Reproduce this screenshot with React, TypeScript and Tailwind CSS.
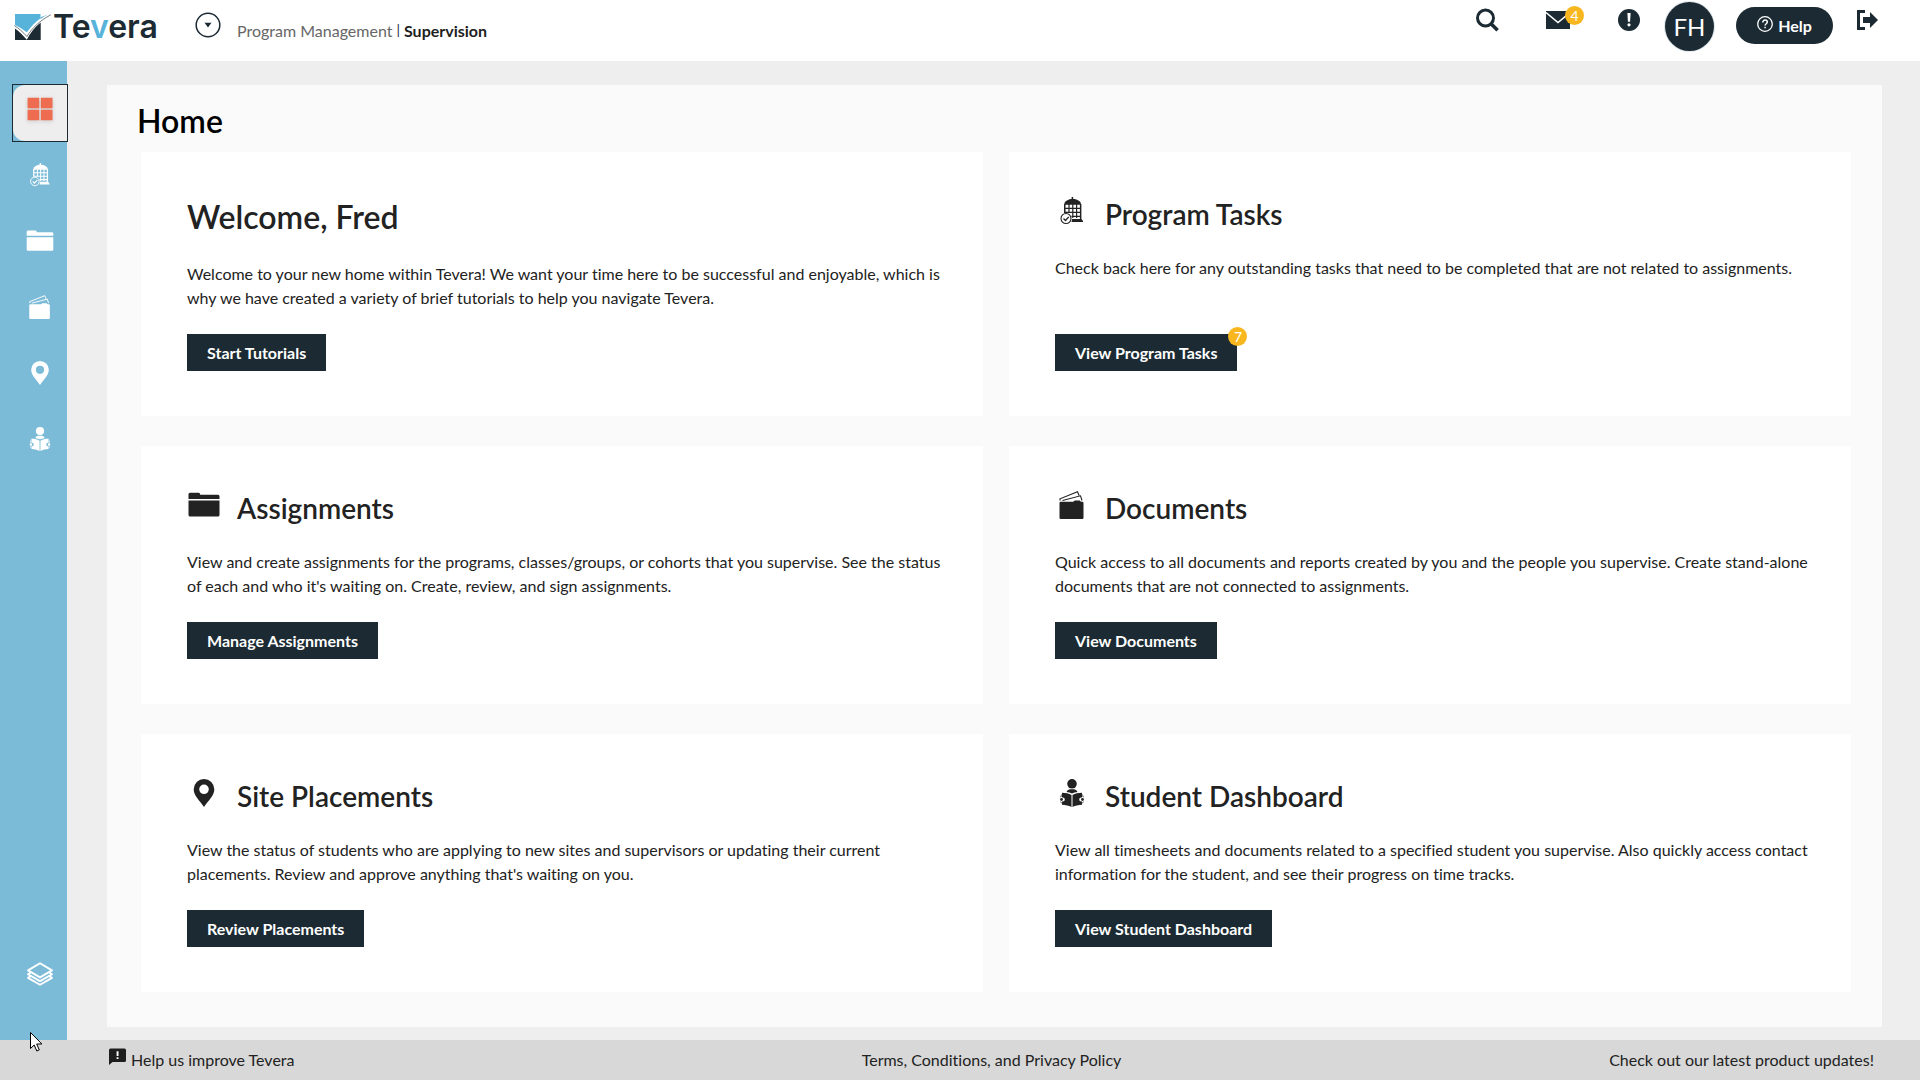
import type { ReactNode } from "react";

type IconProps = { className?: string };

function BuildingIcon({ className }: IconProps) {
    return (
        <svg viewBox="0 0 32 28" className={className} fill="currentColor" aria-hidden="true">
            <path d="M15.600 0h1.600v2.200h-1.600zM17 1.800c4 .5 6.500 2 7.800 4V7.800H8.500V5.800C9.800 3.800 12.500 2.200 16.200 1.800z" />
            <path d="M8 7h1.500v9H8zM23.900 7h1.500v15h-1.500zM12.400 7h1.200v8h-1.200zM16.200 7h1.200v14h-1.200zM20 7h1.200v14H20zM8 10.800h17v1.200H8zM8 14.800h17V16H8zM15.500 18.800H25V20h-9.500zM16.200 22h9.300l1.500 2v1H15.500z" />
            <circle cx="10" cy="21.500" r="5" fill="none" stroke="currentColor" strokeWidth="1.100" />
            <path d="M7.500 21.500l2 2 3.300-3.600" fill="none" stroke="currentColor" strokeWidth="1.300" />
        </svg>
    );
}

function FolderIcon({ className }: IconProps) {
    return (
        <svg viewBox="0 0 32 28" className={className} fill="currentColor" aria-hidden="true">
            <path d="M.5 8V3.200A1.500 1.500 0 0 1 2 1.700h8.500a1.500 1.500 0 0 1 1.500 1.200l.2.800H30a1.500 1.500 0 0 1 1.500 1.500V8z" />
            <path d="M.5 9.500h31V24a1.500 1.500 0 0 1-1.500 1.500H2A1.500 1.500 0 0 1 .5 24z" />
        </svg>
    );
}

function DocumentsIcon({ className }: IconProps) {
    return (
        <svg viewBox="0 0 32 28" className={className} fill="currentColor" aria-hidden="true">
            <path d="M4 9.500V7.800L21.500.8l1.600 3.700M6.500 9.500L24.500 4.800l1.500 4.700" fill="none" stroke="currentColor" strokeWidth="1.100" />
            <path d="M3.500 12a1.200 1.200 0 0 1 1.200-1.200h12.500l1.500-1.300h5l1.300 1.300h1.300a1.200 1.200 0 0 1 1.200 1.200v14.700a1.200 1.200 0 0 1-1.200 1.200H4.700a1.200 1.200 0 0 1-1.200-1.200z" />
        </svg>
    );
}

function PinIcon({ className }: IconProps) {
    return (
        <svg viewBox="0 0 32 28" className={className} fill="currentColor" aria-hidden="true">
            <path fillRule="evenodd" d="M16 0a10.300 10.300 0 0 0-10.300 10.300C5.700 17 12 22 16 28c4-6 10.300-11 10.300-17.700A10.300 10.300 0 0 0 16 0zm0 5.500a4.800 4.800 0 1 1 0 9.600 4.800 4.800 0 0 1 0-9.600z" />
        </svg>
    );
}

function ReaderIcon({ className }: IconProps) {
    return (
        <svg viewBox="0 0 32 28" className={className} fill="currentColor" aria-hidden="true">
            <circle cx="16" cy="4.800" r="4.800" />
            <path d="M10.500 13c.8-1.800 2.300-2.700 3.500-2.700h4c1.200 0 2.700.9 3.500 2.700-2 .2-4.100.7-5.500 1.600-1.400-.9-3.500-1.400-5.500-1.600z" />
            <path d="M6 13.800c3.500 0 6.900.7 9.500 2.200V28c-2.800-1.500-6-2-9.500-2.300v-3.200h.8a2 2 0 0 0 0-4H6zM26 13.800c-3.500 0-6.900.7-9.500 2.200V28c2.800-1.500 6-2 9.500-2.300v-3.200h-.8a2 2 0 0 1 0-4h.8z" />
            <path d="M5.500 14.500v3.300l-1.300.8zM5.500 23v1.800l-1.500-2.500zM26.500 14.500v3.300l1.300.8zM26.500 23v1.800l1.500-2.500z" />
            <circle cx="5.500" cy="20.500" r="1.400" />
            <circle cx="26.500" cy="20.500" r="1.400" />
        </svg>
    );
}

function HomeIcon({ className }: IconProps) {
    return (
        <svg viewBox="0 0 32 28" className={className} fill="currentColor" aria-hidden="true">
            <path d="M1.500 1h13.600v12H1.500zM17 1h13.600v12H17zM1.500 15h13.600v12H1.500zM17 15h13.600v12H17z" />
        </svg>
    );
}

function LayersIcon({ className }: IconProps) {
    return (
        <svg viewBox="0 0 32 28" className={className} fill="none" stroke="currentColor" strokeWidth="2.200" strokeLinejoin="round" aria-hidden="true">
            <path d="M16 1.500l14 8.200-14 8.200L2 9.700z" />
            <path d="M4.800 12.500L2 14.300l14 8 14-8-2.800-1.800M4.800 16.700L2 18.500l14 8 14-8-2.800-1.800" />
        </svg>
    );
}

function LogoMark() {
    return (
        <svg viewBox="0 0 38 28" className="h-7 w-[38px]" aria-hidden="true">
            <path d="M1 15.500C5 18.500 9 22 12.800 26.800 16 20 20.500 14.500 26.700 9.500V27H1z" fill="#1c2b33" />
            <path d="M1 1h25.500v4.200C21.500 9 17 13.500 12.800 19.300 9 16.500 5 13.800 1 12z" fill="#57b3da" />
            <path d="M26.500 4.200L34 1.600C31.300 3 29 4.300 26.500 6z" fill="#57b3da" />
            <path d="M36.800 1.800C26 7.500 18 15 12.900 23.500 9 19 5 15.500.3 12.600" fill="none" stroke="#1c2b33" strokeWidth=".6" />
        </svg>
    );
}

function Badge({ children }: { children: ReactNode }) {
    return (
        <span className="absolute -top-[7px] -right-[10px] flex size-[19px] items-center justify-center rounded-full bg-[#f8b71f] text-[14px] leading-none font-normal text-white">
            {children}
        </span>
    );
}

const navItems = [
    { label: "Home", Icon: HomeIcon, active: true },
    { label: "Program Tasks", Icon: BuildingIcon },
    { label: "Assignments", Icon: FolderIcon },
    { label: "Documents", Icon: DocumentsIcon },
    { label: "Site Placements", Icon: PinIcon },
    { label: "Student Dashboard", Icon: ReaderIcon },
];

const cards = [
    {
        title: "Welcome, Fred",
        text: "Welcome to your new home within Tevera! We want your time here to be successful and enjoyable, which is why we have created a variety of brief tutorials to help you navigate Tevera.",
        button: "Start Tutorials",
    },
    {
        title: "Program Tasks",
        Icon: BuildingIcon,
        text: "Check back here for any outstanding tasks that need to be completed that are not related to assignments.",
        button: "View Program Tasks",
        count: 7,
    },
    {
        title: "Assignments",
        Icon: FolderIcon,
        text: "View and create assignments for the programs, classes/groups, or cohorts that you supervise. See the status of each and who it's waiting on. Create, review, and sign assignments.",
        button: "Manage Assignments",
    },
    {
        title: "Documents",
        Icon: DocumentsIcon,
        text: "Quick access to all documents and reports created by you and the people you supervise. Create stand-alone documents that are not connected to assignments.",
        button: "View Documents",
    },
    {
        title: "Site Placements",
        Icon: PinIcon,
        text: "View the status of students who are applying to new sites and supervisors or updating their current placements. Review and approve anything that's waiting on you.",
        button: "Review Placements",
    },
    {
        title: "Student Dashboard",
        Icon: ReaderIcon,
        text: "View all timesheets and documents related to a specified student you supervise. Also quickly access contact information for the student, and see their progress on time tracks.",
        button: "View Student Dashboard",
    },
];

function Header() {
    return (
        <header className="flex h-[61px] items-start justify-between bg-white pr-[42px] pl-[14px] text-[#1c2b33]">
            <div className="flex items-start">
                <a href="#" aria-label="Tevera" className="flex w-[146px] items-start gap-px pt-[13px]">
                    <LogoMark />
                    <span className="font-['Inter',sans-serif] text-[32px] leading-7 font-semibold">
                        Te<span className="text-[#57b3da]">v</span>era
                    </span>
                </a>
                <button aria-label="Switch program" className="mt-3 ml-[35px] size-[26px]">
                    <svg viewBox="0 0 26 26" fill="none" className="size-full">
                        <circle cx="13" cy="13" r="11.800" stroke="currentColor" strokeWidth="1.500" />
                        <path d="M9.500 10.700h7L13 15.500z" fill="currentColor" />
                    </svg>
                </button>
                <div className="flex pt-[19px] pl-4 leading-6">
                    <span className="text-[#666]">Program Management</span>
                    <span className="px-1 text-sm leading-[22px]">|</span>
                    <span className="font-bold text-[#1e1e1e]">Supervision</span>
                </div>
            </div>
            <div className="flex items-start">
                <button aria-label="Search" className="mt-2 mr-[47px] size-6">
                    <svg viewBox="0 0 24 24" fill="none" stroke="currentColor" className="size-full">
                        <circle cx="10.500" cy="10" r="8" strokeWidth="3" />
                        <path d="M16 15.800l6.600 6.400" strokeWidth="3.600" />
                    </svg>
                </button>
                <button aria-label="Messages" className="relative mt-[11px] mr-12 h-[18px] w-6">
                    <svg viewBox="0 0 24 18" className="size-full">
                        <path d="M0 0h24v18H0z" fill="currentColor" />
                        <path d="M0 1.500l12 10 12-10" fill="none" stroke="#fff" strokeWidth="1.600" />
                    </svg>
                    <span className="absolute -top-[5px] -right-[14px] flex size-[19px] items-center justify-center rounded-full bg-[#f8b71f] text-[14px] leading-none text-white">
                        4
                    </span>
                </button>
                <button aria-label="Alerts" className="mt-[9px] mr-6 size-[22px]">
                    <svg viewBox="0 0 22 22" className="size-full">
                        <circle cx="11" cy="11" r="11" fill="currentColor" />
                        <path d="M9.400 4h3.200l-.5 8.700H9.900z" fill="#fff" />
                        <circle cx="11" cy="15.800" r="1.600" fill="#fff" />
                    </svg>
                </button>
                <button className="mt-px mr-[21px] flex size-[51px] items-center justify-center rounded-full border border-[#dce6ec] bg-white">
                    <span className="flex size-[49px] items-center justify-center rounded-full bg-[#1c2b33] text-2xl text-white">
                        FH
                    </span>
                </button>
                <button className="mt-[7px] mr-6 flex h-[37px] w-[97px] items-center justify-center gap-[5px] rounded-full bg-[#1c2b33] text-base font-bold text-white">
                    <svg viewBox="0 0 16 16" fill="none" stroke="currentColor" className="-mt-1 size-4">
                        <circle cx="8" cy="8" r="7.300" strokeWidth="1.300" />
                        <path d="M5.800 6.400c0-1.400 1-2.300 2.300-2.300 1.300 0 2.200.8 2.200 2 0 1.600-2.200 1.700-2.200 3.400" strokeWidth="1.500" />
                        <path d="M8.100 10.700v1.500" strokeWidth="1.500" />
                    </svg>
                    Help
                </button>
                <button aria-label="Log out" className="mt-[10px] h-5 w-[21px]">
                    <svg viewBox="0 0 21 20" className="size-full" fill="currentColor">
                        <path d="M0 0h8v3H3v14h5v3H0z" />
                        <path d="M6 7h7V2l8 8-8 8v-5H6z" />
                    </svg>
                </button>
            </div>
        </header>
    );
}

function Sidebar() {
    return (
        <nav className="flex w-[67px] shrink-0 flex-col justify-between bg-[#7bbbd7] pt-[23px] pb-[33px] pl-3 text-white">
            <div className="flex flex-col gap-2">
                {navItems.map(({ label, Icon, active }) =>
                    active ? (
                        <a key={label} href="#" aria-label={label} className="h-[58px] w-14 border border-[#1c2b33]">
                            <span className="flex size-full justify-center rounded-l-xl bg-[#eee] pt-3 text-[#ee6c50]">
                                <Icon className="h-6 w-7 drop-shadow-sm" />
                            </span>
                        </a>
                    ) : (
                        <a key={label} href="#" aria-label={label} className="flex h-[58px] w-14 justify-center pt-[13px]">
                            <Icon className="h-6 w-7" />
                        </a>
                    )
                )}
            </div>
            <a href="#" aria-label="Layers" className="flex h-[58px] w-14 justify-center pt-[13px]">
                <LayersIcon className="h-6 w-7" />
            </a>
        </nav>
    );
}

export default function App() {
    return (
        <div className="relative flex min-h-screen flex-col bg-[#eee] font-['Lato',sans-serif] text-base text-[#222] [font-variant-ligatures:none]">
            <Header />
            <div className="flex grow">
                <Sidebar />
                <main className="mt-6 mr-[38px] mb-[13px] ml-10 grow bg-[#fafafa] pt-[17px] pr-[31px] pb-[35px] pl-[34px]">
                    <h1 className="-ml-1 text-[32px] leading-[38px] font-semibold text-black">Home</h1>
                    <div className="mt-3 grid grid-cols-2 gap-x-[26px] gap-y-[30px]">
                        {cards.map(({ title, Icon, text, button, count }) => (
                            <section key={title} className="flex flex-col items-start bg-white py-[45px] pr-8 pl-[46px]">
                                {Icon ? (
                                    <div className="mb-[25px] flex gap-4">
                                        <span className="flex w-[34px] justify-center">
                                            <Icon className="h-7 w-8" />
                                        </span>
                                        <h2 className="text-[28px] leading-[34px] font-semibold">{title}</h2>
                                    </div>
                                ) : (
                                    <h2 className="mt-px mb-[26px] text-[32px] leading-[38px] font-semibold">{title}</h2>
                                )}
                                <p className="mb-6 leading-6">{text}</p>
                                <button className="relative mt-auto h-[37px] bg-[#1c2b33] px-5 font-bold text-white">
                                    {button}
                                    {count && <Badge>{count}</Badge>}
                                </button>
                            </section>
                        ))}
                    </div>
                </main>
            </div>
            <footer className="grid h-10 grid-cols-3 items-center bg-[#d8d8d8] pr-[46px] pl-[109px] leading-6">
                <a href="#" className="flex gap-[5px]">
                    <svg viewBox="0 0 17 17" className="size-[17px]" aria-hidden="true">
                        <path d="M1.500.5h14A1.500 1.500 0 0 1 17 2v10.500a1.500 1.500 0 0 1-1.500 1.500H3.500L0 17V2A1.500 1.500 0 0 1 1.500.500z" fill="#1e1e1e" />
                        <path d="M7.600 3.300h1.900v4.600H7.600zM7.600 9.200h1.900V11H7.600z" fill="#fff" />
                    </svg>
                    Help us improve Tevera
                </a>
                <a href="#" className="justify-self-center">Terms, Conditions, and Privacy Policy</a>
                <a href="#" className="justify-self-end">Check out our latest product updates!</a>
            </footer>
            {/* mouse pointer */}
            <svg viewBox="0 0 13 20" className="absolute bottom-[28px] left-[30px] h-5 w-[13px]" aria-hidden="true">
                <path d="M.5.500v16l3.700-3.500 2.600 6 2.500-1.100-2.600-5.900h5.200z" fill="#fff" stroke="#000" />
            </svg>
        </div>
    );
}
